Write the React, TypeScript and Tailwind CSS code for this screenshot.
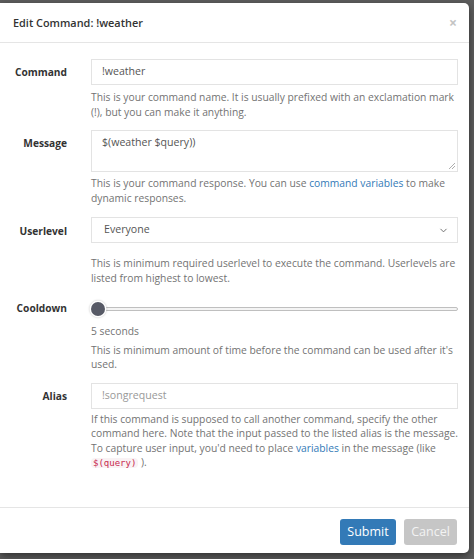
import { ChevronDown } from 'lucide-react'

const font = { fontFamily: '"Open Sans", "Liberation Sans", sans-serif' }

function Row({ label, labelClass = '', children }: { label: string; labelClass?: string; children: React.ReactNode }) {
  return (
    <div className="flex">
      <div className={`w-[67px] shrink-0 text-right text-[10.2px] leading-[14px] font-bold text-[#333] ${labelClass}`}>{label}</div>
      <div className="ml-[24px] w-[367px]">{children}</div>
    </div>
  )
}

function Help({ children, className = '' }: { children: React.ReactNode; className?: string }) {
  return <p className={`text-[10.3px] leading-[14.5px] text-[#737373] ${className}`}>{children}</p>
}

export default function App() {
  return (
    <div className="w-[474px] h-[559px] bg-[#5e5e5e] pt-[3px] overflow-hidden" style={font}>
      <div className="w-[469px] h-[550px] bg-white rounded-r-[5px] flex flex-col shadow-[0_3px_9px_rgba(0,0,0,0.5)]">
        <div className="h-[40px] shrink-0 px-[13px] flex items-center justify-between border-b border-[#e5e5e5]">
          <h4 className="text-[10.9px] font-semibold text-[#333] mt-[1px]">Edit Command: !weather</h4>
          <span className="text-[14px] leading-none text-[#c4c4c4] font-bold -mr-[1px]">×</span>
        </div>

        <div className="flex-1 pt-[16px]">
          <Row label="Command" labelClass="pt-[6px]">
            <div className="h-[26px] border border-[#e3e3e3] px-[10px] flex items-center text-[10.6px] text-[#555]">!weather</div>
            <Help className="mt-[5px]">
              This is your command name. It is usually prefixed with an exclamation mark (!), but you can make it anything.
            </Help>
          </Row>

          <Row label="Message" labelClass="pt-[17px]">
            <div className="mt-[11px] h-[42px] border border-[#e3e3e3] px-[10px] pt-[4px] text-[10.6px] text-[#555] relative">
              $(weather $query))
              <svg className="absolute right-[1px] bottom-[1px]" width="9" height="9" viewBox="0 0 9 9">
                <path d="M8 2 L2 8 M8 5 L5 8" stroke="#999" strokeWidth="0.8" />
              </svg>
            </div>
            <Help className="mt-[4px]">
              This is your command response. You can use <span className="text-[#337ab7]">command variables</span> to make dynamic responses.
            </Help>
          </Row>

          <Row label="Userlevel" labelClass="pt-[19px]">
            <div className="mt-[12px] h-[26px] border border-[#e3e3e3] pl-[12px] pr-[8px] flex items-center justify-between text-[10.6px] text-[#555]">
              <span>Everyone</span>
              <ChevronDown size={11} strokeWidth={2} color="#666" />
            </div>
            <Help className="mt-[13px]">
              This is minimum required userlevel to execute the command. Userlevels are listed from highest to lowest.
            </Help>
          </Row>

          <Row label="Cooldown" labelClass="pt-[16px]">
            <div className="mt-[17px] h-[14px] relative flex items-center">
              <div className="w-full h-[4px] rounded-full border border-[#bfbfbf] bg-[#f4f4f4]" />
              <div className="absolute left-0 top-0 w-[14px] h-[14px] rounded-full bg-[#575a66] shadow-[0_0_0_1.5px_#fff,0_0_2px_1.5px_rgba(0,0,0,0.25)]" />
            </div>
            <Help className="mt-[8px] text-[#555]">5 seconds</Help>
            <Help className="mt-[4px]">
              This is minimum amount of time before the command can be used after it's used.
            </Help>
          </Row>

          <Row label="Alias" labelClass="pt-[17px]">
            <div className="mt-[11px] h-[26px] border border-[#e3e3e3] px-[10px] flex items-center text-[10.6px] text-[#999]">!songrequest</div>
            <Help className="mt-[3px]">
              If this command is supposed to call another command, specify the other command here. Note that the input passed to the listed alias is the message. To capture user input, you'd need to place <span className="text-[#337ab7]">variables</span> in the message (like{' '}
              <code className="text-[9px] text-[#c7254e] bg-[#f9f2f4] px-[2px] rounded-sm" style={{ fontFamily: '"DejaVu Sans Mono", "Liberation Mono", monospace' }}>$(query)</code> ).
            </Help>
          </Row>
        </div>

        <div className="h-[46px] shrink-0 border-t border-[#e5e5e5] flex items-start justify-end gap-[8px] pr-[12px] pt-[11px]">
          <button className="h-[26px] w-[56px] rounded-[3px] bg-[#337ab7] text-white text-[12.5px]">Submit</button>
          <button className="h-[26px] w-[53px] rounded-[3px] bg-[#c6c6c6] text-[#f3f3f3] text-[12.5px]">Cancel</button>
        </div>
      </div>
    </div>
  )
}
